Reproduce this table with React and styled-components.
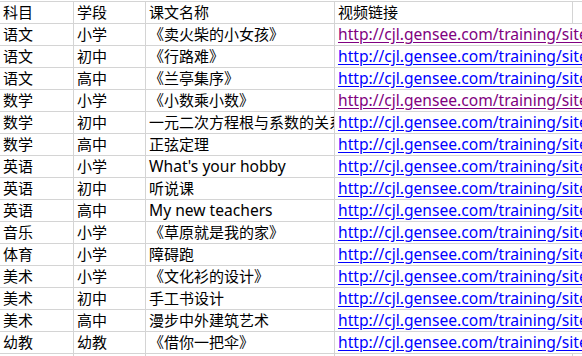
import React from 'react';
import styled, { createGlobalStyle } from 'styled-components';

const GlobalStyle = createGlobalStyle`
    html, body {
        margin: 0;
        padding: 0;
        background: #ffffff;
        overflow: hidden;
    }
`

const Sheet = styled.div`
    width: 582px;
    height: 356px;
    overflow: hidden;
    padding-top: 1px;
    box-sizing: border-box;
    font-family: "Noto Sans", "Noto Sans CJK SC", sans-serif;
    font-size: 15px;
    color: #000000;
`

const Grid = styled.div`
    display: grid;
    grid-template-columns: 74px 72px 189px 238px 60px;
    grid-auto-rows: 22px;
    border-top: 1px solid #d4d4d4;
`

const Cell = styled.div`
    box-sizing: border-box;
    border-bottom: 1px solid #d4d4d4;
    border-right: ${p => (p.$open ? 'none' : '1px solid #d4d4d4')};
    padding: 0 0 0 3px;
    display: flex;
    align-items: center;
    white-space: nowrap;
    overflow: ${p => (p.$open ? 'visible' : 'hidden')};
    line-height: 21px;
    font-size: ${p => (p.$latin ? '15.6px' : '15px')};
`

const Link = styled.a`
    color: ${p => (p.$visited ? '#800080' : '#0000ff')};
    font-size: 15.6px;
    text-decoration: underline;
    text-underline-offset: 2px;
`

const url = 'http://cjl.gensee.com/training/site/v/'

const rows = [
    ['语文', '小学', '《卖火柴的小女孩》', true],
    ['语文', '初中', '《行路难》'],
    ['语文', '高中', '《兰亭集序》'],
    ['数学', '小学', '《小数乘小数》', true],
    ['数学', '初中', '一元二次方程根与系数的关系'],
    ['数学', '高中', '正弦定理'],
    ['英语', '小学', "What's your hobby"],
    ['英语', '初中', '听说课'],
    ['英语', '高中', 'My new teachers'],
    ['音乐', '小学', '《草原就是我的家》'],
    ['体育', '小学', '障碍跑'],
    ['美术', '小学', '《文化衫的设计》'],
    ['美术', '初中', '手工书设计'],
    ['美术', '高中', '漫步中外建筑艺术'],
    ['幼教', '幼教', '《借你一把伞》'],
]

export default function App() {
    return (
        <Sheet>
            <GlobalStyle />
            <Grid>
                <Cell>科目</Cell>
                <Cell>学段</Cell>
                <Cell>课文名称</Cell>
                <Cell>视频链接</Cell>
                <Cell />
                {rows.map(([subject, stage, title, visited], i) => (
                    <React.Fragment key={i}>
                        <Cell>{subject}</Cell>
                        <Cell>{stage}</Cell>
                        <Cell $latin={/^[A-Za-z]/.test(title)}>{title}</Cell>
                        <Cell $open>
                            <Link href="#" $visited={visited}>{url}</Link>
                        </Cell>
                        <Cell />
                    </React.Fragment>
                ))}
                <Cell />
                <Cell />
                <Cell />
                <Cell />
                <Cell />
            </Grid>
        </Sheet>
    );
}
